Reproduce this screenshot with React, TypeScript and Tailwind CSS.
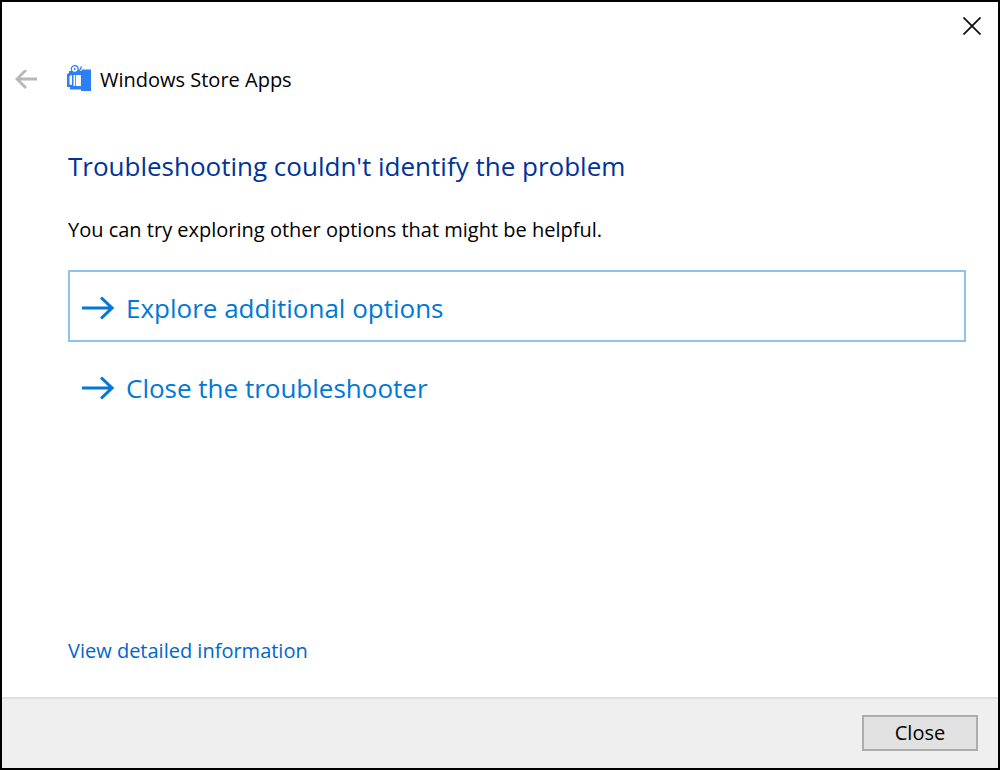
import { useState } from "react";

interface Option {
  id: string;
  label: string;
}

const OPTIONS: Option[] = [
  { id: "explore", label: "Explore additional options" },
  { id: "close", label: "Close the troubleshooter" },
];

function StoreIcon() {
  return (
    <svg width="26" height="32" viewBox="0 0 26 32" fill="none" aria-hidden="true">
      <path d="M1 10L3 9V7h12l1-1.5h9V27H15v-1.5H4V23H1z" fill="#2d7ff9" />
      <path d="M3.5 12l2.5-1v10l-2.5-.5z" fill="#fff" />
      <path d="M7.5 11H15v11H7.5z" fill="#fff" />
      <path d="M9.5 11v11" stroke="#2d7ff9" strokeWidth="0.8" />
      <circle cx="8.7" cy="5" r="3.4" fill="#fff" stroke="#2d7ff9" strokeWidth="1.3" />
      <circle cx="8.7" cy="5" r="1" fill="#2d7ff9" />
      <path d="M11 7.5c2.5 0 3.5-2 4.5-5" stroke="#2d7ff9" strokeWidth="1.4" />
    </svg>
  );
}

function ArrowIcon() {
  return (
    <svg width="32" height="24" viewBox="0 0 32 24" fill="none" aria-hidden="true" className="shrink-0">
      <path d="M0 12h30M19 1.5L30 12L19 22.5" stroke="#0078d7" strokeWidth="3" />
    </svg>
  );
}

export default function App() {
  const [selected, setSelected] = useState("explore");

  return (
    <div className="flex min-h-screen flex-col border-2 border-black bg-white font-['Open_Sans',sans-serif] text-xl text-black">
      {/* Title bar */}
      <div className="flex h-12 justify-end">
        <button aria-label="Close window" className="flex w-13 items-center justify-center">
          <svg width="18" height="18" viewBox="0 0 18 18" aria-hidden="true">
            <path d="M0.5 0.5L17.5 17.5M17.5 0.5L0.5 17.5" stroke="#111" strokeWidth="1.8" />
          </svg>
        </button>
      </div>

      {/* Header */}
      <header className="flex h-15 items-center pl-3">
        <button aria-label="Back" disabled className="w-13">
          <svg width="24" height="20" viewBox="0 0 24 20" fill="none" aria-hidden="true">
            <path d="M23 9H3M12 0L3 9L12 18" stroke="#b8b8b8" strokeWidth="2.8" />
          </svg>
        </button>
        <StoreIcon />
        <span className="ml-2">Windows Store Apps</span>
      </header>

      {/* Content */}
      <main className="flex flex-1 flex-col pr-8 pl-[66px]">
        <h1 className="mt-9 text-[26px] leading-10 text-[#003399]">
          Troubleshooting couldn't identify the problem
        </h1>
        <p className="mt-7 leading-8">You can try exploring other options that might be helpful.</p>

        <div className="mt-6 flex flex-col gap-2">
          {OPTIONS.map((option) => (
            <button
              key={option.id}
              onClick={() => setSelected(option.id)}
              className={`flex h-18 items-center gap-3 border-2 px-3 pt-1 text-left text-[26px] text-[#0078d7] ${
                selected === option.id ? "border-[#8ec3ee]" : "border-transparent"
              }`}
            >
              <ArrowIcon />
              {option.label}
            </button>
          ))}
        </div>

        <a href="#details" className="mt-auto mb-8 self-start leading-7 text-[#0066cc]">
          View detailed information
        </a>
      </main>

      {/* Footer */}
      <footer className="flex justify-end border-t-2 border-[#dfdfdf] bg-[#efefef] px-5 pt-4 pb-[17px]">
        <button className="flex h-9 w-29 items-center justify-center border-2 border-[#adadad] bg-[#e1e1e1]">
          Close
        </button>
      </footer>
    </div>
  );
}
